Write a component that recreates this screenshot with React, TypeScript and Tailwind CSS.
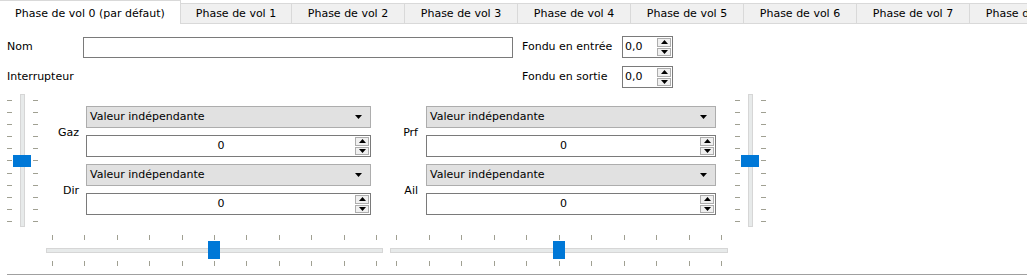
import React from "react";

const tabs = [
  "Phase de vol 1",
  "Phase de vol 2",
  "Phase de vol 3",
  "Phase de vol 4",
  "Phase de vol 5",
  "Phase de vol 6",
  "Phase de vol 7",
  "Phase de vol 8",
];

function Arrow({ up }: { up?: boolean }) {
  return (
    <svg width="7" height="4" viewBox="0 0 7 4" className="block">
      <path d={up ? "M0 4 L3.5 0 L7 4 Z" : "M0 0 L7 0 L3.5 4 Z"} fill="#000" />
    </svg>
  );
}

function SpinButtons() {
  return (
    <div className="flex flex-col w-[15px] h-full py-px pr-px gap-px">
      <div className="flex-1 flex items-center justify-center bg-[#f0f0f0] border border-[#adadad]">
        <Arrow up />
      </div>
      <div className="flex-1 flex items-center justify-center bg-[#f0f0f0] border border-[#adadad]">
        <Arrow />
      </div>
    </div>
  );
}

function SpinBox({ value, center, className }: { value: string; center?: boolean; className: string }) {
  return (
    <div className={`flex items-stretch bg-white border border-[#7a7a7a] ${className}`}>
      <div className={`flex-1 flex items-center px-[2px] pt-px ${center ? "justify-center" : ""}`}>{value}</div>
      <SpinButtons />
    </div>
  );
}

function Combo() {
  return (
    <div className="flex items-center justify-between h-[22px] bg-[#e1e1e1] border border-[#adadad] pl-[3px] pr-[8px]">
      <span className="pt-px">Valeur indépendante</span>
      <Arrow />
    </div>
  );
}

function Ticks({ n, vertical }: { n: number; vertical?: boolean }) {
  return (
    <div className={`flex justify-between ${vertical ? "flex-col w-[5px] h-full pt-[6px] pb-[5px]" : "flex-row h-[5px] w-full pl-[6px] pr-[6px]"}`}>
      {Array.from({ length: n }).map((_, i) => (
        <div key={i} className={vertical ? "h-px w-[5px] bg-[#a0a092]" : "w-px h-[5px] bg-[#a0a092]"} />
      ))}
    </div>
  );
}

function VSlider() {
  return (
    <div className="relative flex h-[133px] w-[31px] gap-[8px]">
      <Ticks n={11} vertical />
      <div className="w-[5px] h-full bg-[#e7eaea] border border-[#d6d6d6]" />
      <Ticks n={11} vertical />
      <div className="absolute left-[6px] top-[61px] w-[18px] h-[12px] bg-[#0078d7]" />
    </div>
  );
}

function HSlider({ width, handle }: { width: number; handle: number }) {
  return (
    <div className="relative flex flex-col h-[31px] gap-[8px]" style={{ width }}>
      <Ticks n={11} />
      <div className="h-[5px] w-full bg-[#e7eaea] border border-[#d6d6d6]" />
      <Ticks n={11} />
      <div className="absolute top-[6px] w-[12px] h-[18px] bg-[#0078d7]" style={{ left: handle }} />
    </div>
  );
}

function Pair({ label, labelW, ctrlW, gap }: { label: string; labelW: number; ctrlW: number; gap: number }) {
  return (
    <div className="flex items-center" style={{ gap }}>
      <div className="text-right pt-[4px]" style={{ width: labelW }}>{label}</div>
      <div className="flex flex-col gap-[7px]" style={{ width: ctrlW }}>
        <Combo />
        <SpinBox value="0" center className="h-[22px]" />
      </div>
    </div>
  );
}

export default function App() {
  return (
    <div className="w-[1027px] h-[277px] bg-white text-black text-[11px] font-['DejaVu_Sans',sans-serif] overflow-hidden">
      {/* Tabs */}
      <div className="flex h-[24px] items-end overflow-hidden">
        <div className="w-[181px] h-[24px] shrink-0 flex items-center justify-center pt-[3px] bg-white border-t border-r border-[#d9d9d9]">
          Phase de vol 0 (par défaut)
        </div>
        {tabs.map((t, i) => (
          <div
            key={t}
            className={`${i === 0 ? "w-[111px]" : "w-[113px]"} h-[21px] shrink-0 flex items-center justify-center pt-[2px] bg-[#f0f0f0] border border-l-0 border-[#d9d9d9] whitespace-nowrap`}
          >
            {t}
          </div>
        ))}
      </div>

      {/* Name / fades */}
      <div className="flex items-center pl-[7px] mt-[12px] h-[22px]">
        <div className="w-[76px]">Nom</div>
        <div className="w-[430px] h-[21px] border border-[#7a7a7a] bg-white" />
        <div className="ml-[9px] w-[100px]">Fondu en entrée</div>
        <SpinBox value="0,0" className="w-[51px] h-[22px]" />
      </div>
      <div className="flex items-center pl-[7px] mt-[8px] h-[22px]">
        <div className="w-[515px]">Interrupteur</div>
        <div className="w-[100px]">Fondu en sortie</div>
        <SpinBox value="0,0" className="w-[51px] h-[22px]" />
      </div>

      {/* Main area */}
      <div className="flex pl-[7px] mt-[6px] h-[133px]">
        <VSlider />
        <div className="w-[697px] flex pl-[8px] pt-[12px] gap-[7px]">
          <div className="w-[337px] flex flex-col gap-[7px]">
            <Pair label="Gaz" labelW={33} ctrlW={285} gap={7} />
            <Pair label="Dir" labelW={33} ctrlW={285} gap={7} />
          </div>
          <div className="w-[338px] flex flex-col gap-[7px]">
            <Pair label="Prf" labelW={28} ctrlW={290} gap={8} />
            <Pair label="Ail" labelW={28} ctrlW={290} gap={8} />
          </div>
        </div>
        <VSlider />
      </div>

      {/* Horizontal sliders */}
      <div className="flex pl-[46px] mt-[8px] gap-[7px]">
        <HSlider width={337} handle={162} />
        <HSlider width={338} handle={163} />
      </div>

      <div className="ml-[7px] mt-[8px] h-px bg-[#a0a0a0]" />
    </div>
  );
}
